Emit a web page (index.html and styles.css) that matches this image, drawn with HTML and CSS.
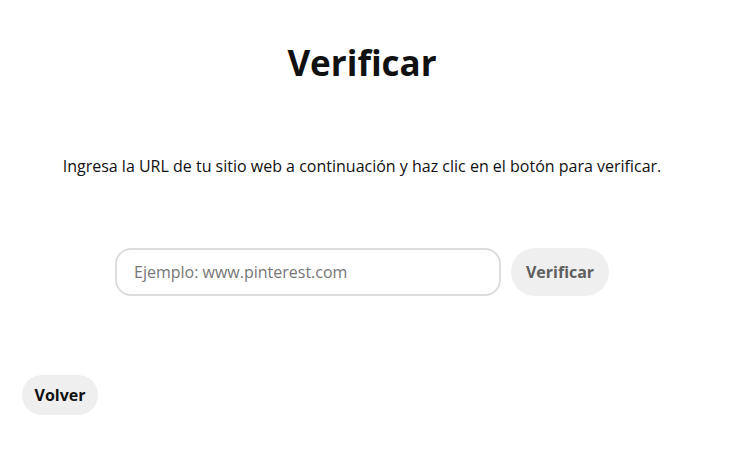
FILE: index.html
```html
<!DOCTYPE html>
<html lang="es">
<head>
<meta charset="utf-8">
<title>Verificar</title>
<link rel="stylesheet" href="styles.css">
</head>
<body>
<main class="page">
  <h1 class="title">Verificar</h1>
  <p class="desc">Ingresa la URL de tu sitio web a continuación y haz clic en el botón para verificar.</p>
  <div class="form-row">
    <input class="url-input" type="text" placeholder="Ejemplo: www.pinterest.com">
    <button class="btn btn-verify" type="button">Verificar</button>
  </div>
  <div class="footer">
    <button class="btn btn-back" type="button">Volver</button>
  </div>
</main>
</body>
</html>
```

FILE: styles.css
```css
* { box-sizing: border-box; }
html, body { margin: 0; padding: 0; background: #fff; }
body {
  font-family: "Open Sans", "Noto Sans", "Liberation Sans", sans-serif;
  color: #111;
  width: 730px;
  height: 453px;
  overflow: hidden;
}
.page {
  width: 724px;
  display: flex;
  flex-direction: column;
  align-items: center;
}
.title {
  margin: 39px 0 0;
  font-size: 35px;
  line-height: 48px;
  font-weight: 700;
  color: #111;
}
.desc {
  margin: 68px 0 0;
  font-size: 16px;
  line-height: 22px;
  color: #111;
}
.form-row {
  margin-top: 71px;
  display: flex;
  align-items: center;
  gap: 10px;
}
.url-input {
  width: 386px;
  height: 48px;
  border: 2px solid #ddd;
  border-radius: 16px;
  padding: 0 17px;
  font-family: inherit;
  font-size: 16px;
  color: #111;
  outline: none;
}
.url-input::placeholder { color: #767676; }
.btn {
  border: none;
  background: #efefef;
  font-family: inherit;
  font-weight: 700;
  font-size: 16px;
  border-radius: 24px;
  cursor: pointer;
}
.btn-verify {
  width: 98px;
  height: 48px;
  color: #5f5f5f;
}
.footer {
  align-self: stretch;
  margin-top: 79px;
  padding-left: 22px;
}
.btn-back {
  width: 76px;
  height: 40px;
  border-radius: 20px;
  color: #111;
}
```
